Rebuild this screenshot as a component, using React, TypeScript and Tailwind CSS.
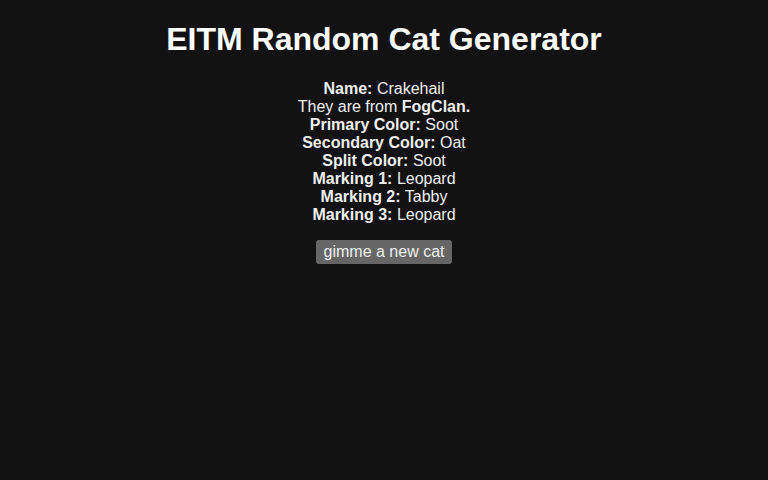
const cat = {
  name: 'Crakehail',
  clan: 'FogClan',
  primary: 'Soot',
  secondary: 'Oat',
  split: 'Soot',
  markings: ['Leopard', 'Tabby', 'Leopard'],
}

const Row = ({ label, value }: { label: string; value: string }) => (
  <div>
    <b>{label}:</b> {value}
  </div>
)

export default function App() {
  return (
    <div className="min-h-[480px] bg-[#121212] text-[#f0f0f0] text-center font-['Liberation_Sans',Arial,sans-serif]">
      <h1 className="text-[32px] leading-[37px] font-bold text-white pt-[21px] m-0">EITM Random Cat Generator</h1>
      <div className="mt-[22px] text-base leading-[18px]">
        <Row label="Name" value={cat.name} />
        <div>
          They are from <b>{cat.clan}.</b>
        </div>
        <Row label="Primary Color" value={cat.primary} />
        <Row label="Secondary Color" value={cat.secondary} />
        <Row label="Split Color" value={cat.split} />
        {cat.markings.map((m, i) => (
          <Row key={i} label={`Marking ${i + 1}`} value={m} />
        ))}
      </div>
      <button className="mt-4 h-6 px-2 rounded-[3px] bg-[#666] text-[#eee] text-base leading-6">
        gimme a new cat
      </button>
    </div>
  )
}
